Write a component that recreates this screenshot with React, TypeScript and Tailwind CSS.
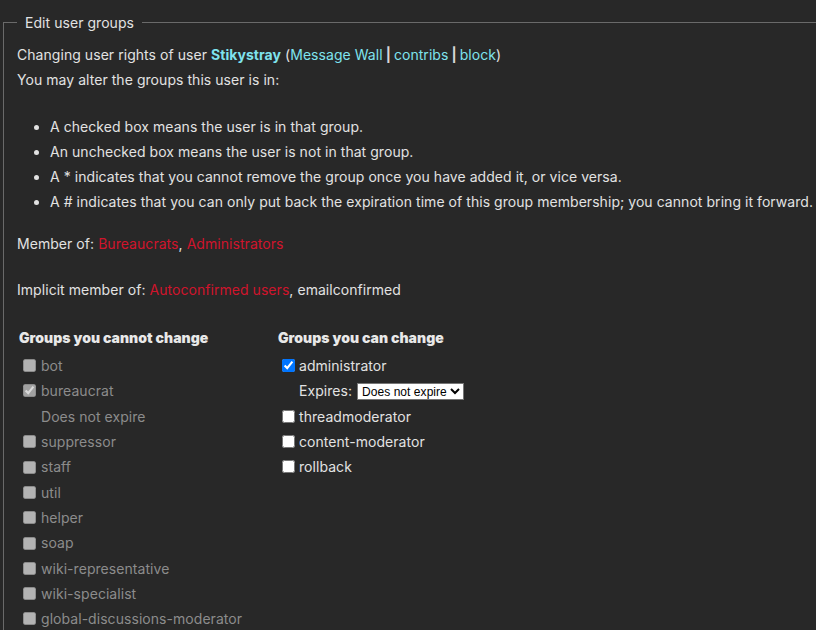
import React from "react";

const fixedGroups = [
  { name: "bot" },
  { name: "bureaucrat", checked: true, note: "Does not expire" },
  { name: "suppressor" },
  { name: "staff" },
  { name: "util" },
  { name: "helper" },
  { name: "soap" },
  { name: "wiki-representative" },
  { name: "wiki-specialist" },
  { name: "global-discussions-moderator" },
];

const editableGroups = ["threadmoderator", "content-moderator", "rollback"];

export default function App() {
  return (
    <div className="w-[816px] h-[630px] overflow-hidden bg-[#282828] text-[#e2e2e2] text-[14px] leading-[25px] tracking-[0.05px] font-['Inter','Noto_Sans',sans-serif]">
      <fieldset className="ml-[3px] mt-[10px] w-[860px] border border-[#6a6a6a] pl-[13px] pt-[7px] pb-4">
        <legend className="px-2">Edit user groups</legend>

        <p>
          Changing user rights of user{" "}
          <a className="font-bold text-[#7fe3ee]">Stikystray</a> (
          <a className="text-[#7fe3ee]">Message Wall</a>
          <span className="text-[#d8d8d8] font-bold px-[3px]">|</span>
          <a className="text-[#7fe3ee]">contribs</a>
          <span className="text-[#d8d8d8] font-bold px-[3px]">|</span>
          <a className="text-[#7fe3ee]">block</a>)
        </p>
        <p>You may alter the groups this user is in:</p>

        <ul className="list-disc pl-[33px] mt-[22px]">
          <li>A checked box means the user is in that group.</li>
          <li>An unchecked box means the user is not in that group.</li>
          <li>A * indicates that you cannot remove the group once you have added it, or vice versa.</li>
          <li>
            A # indicates that you can only put back the expiration time of this group membership; you cannot bring it
            forward.
          </li>
        </ul>

        <p className="mt-[17px]">
          Member of: <a className="text-[#d0142c]">Bureaucrats</a>, <a className="text-[#d0142c]">Administrators</a>
        </p>
        <p className="mt-[21px]">
          Implicit member of: <a className="text-[#d0142c]">Autoconfirmed users</a>, emailconfirmed
        </p>

        <div className="flex mt-[23px]">
          <div className="w-[260px] pl-[2px]">
            <h3 className="font-black text-[#e8e8e8] leading-[25px] mb-[3px]">Groups you cannot change</h3>
            {fixedGroups.map((g) => (
              <div key={g.name}>
                <label className="flex items-center gap-[5px] pl-[4px] text-[#8c8c8c] leading-[25.3px]">
                  <input type="checkbox" disabled defaultChecked={!!g.checked} className="w-[13px] h-[13px]" />
                  <span>{g.name}</span>
                </label>
                {g.note && <div className="pl-[22px] text-[#8c8c8c] leading-[25.6px]">{g.note}</div>}
              </div>
            ))}
          </div>

          <div className="pl-[1px]">
            <h3 className="font-black text-[#e8e8e8] leading-[25px] mb-[3px]">Groups you can change</h3>
            <label className="flex items-center gap-[4px] pl-[4px]">
              <input type="checkbox" defaultChecked className="w-[13px] h-[13px]" />
              <span>administrator</span>
            </label>
            <div className="flex items-center gap-[5px] pl-[21px] leading-[26px]">
              <span>Expires:</span>
              <select className="h-[17px] bg-white text-black text-[12px] leading-[15px] border border-[#767676] font-['Liberation_Sans',Arial,sans-serif]">
                <option>Does not expire</option>
                <option>1 week</option>
                <option>1 month</option>
              </select>
            </div>
            {editableGroups.map((g) => (
              <label key={g} className="flex items-center gap-[4px] pl-[4px]">
                <input type="checkbox" className="w-[13px] h-[13px]" />
                <span>{g}</span>
              </label>
            ))}
          </div>
        </div>
      </fieldset>
    </div>
  );
}
